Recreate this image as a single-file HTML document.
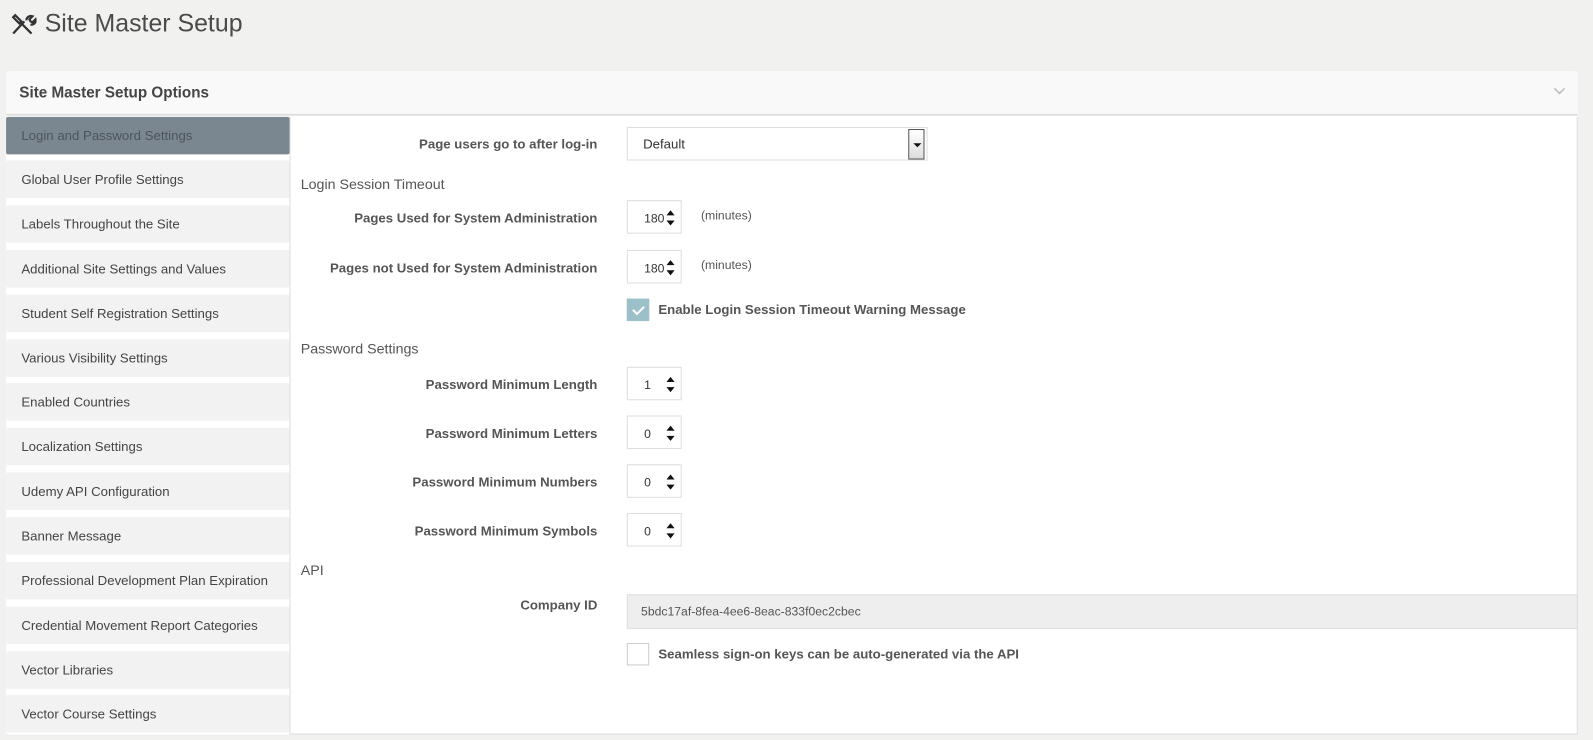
<!DOCTYPE html>
<html><head><meta charset="utf-8"><style>
*{box-sizing:border-box;margin:0;padding:0}
body{width:1593px;height:740px;background:#f1f1f0;font-family:"Liberation Sans",sans-serif;color:#555;position:relative;overflow:hidden}
#w{position:absolute;left:0;top:0;width:1568px;height:728px;transform:scale(1.01594);transform-origin:0 0}
.t{position:absolute;left:44px;top:10px;font-size:24.5px;color:#4a4a4a}
.panel{position:absolute;left:6px;top:70px;width:1547px;height:653px;background:#fff;border-radius:3px}
.ph{height:44px;background:#f9f9f9;border-bottom:2px solid #ddd;padding:13px 13px;font-weight:bold;font-size:15px;color:#444;border-radius:3px 3px 0 0}
.nav{position:absolute;left:6px;top:115px;width:279px}
.ni{position:absolute;left:0;width:279px;height:37px;background:#f2f2f2;font-size:13px;color:#444;padding:11px 15px;border-radius:2px}
.ni.a{background:#7b8790;color:#4d545b}
.content{position:absolute;left:285px;top:115px;width:1268px;height:608px;border:1px solid #ddd;border-top:none}
.lbl{position:absolute;right:980px;font-weight:bold;font-size:13px;color:#555;text-align:right;white-space:nowrap}
.sec{position:absolute;left:296px;font-size:14px;color:#555}
.sp{position:absolute;left:617px;width:54px;height:33px;border:1px solid #ddd;font-size:12px;color:#333;padding:10px 0 0 16px}
.sp:after{content:"";position:absolute;left:38px;top:9px;border:4px solid transparent;border-top:0;border-bottom:5px solid #111}
.sp:before{content:"";position:absolute;left:38px;top:19px;border:4px solid transparent;border-bottom:0;border-top:5px solid #111}
.min{position:absolute;left:690px;font-size:12px;color:#555}
.cb{position:absolute;left:617px;width:22px;height:22px;border:1px solid #ccc}
.cl{position:absolute;left:648px;font-weight:bold;font-size:13px;color:#555}
</style></head><body><div id="w">
<svg style="position:absolute;left:10px;top:13px" width="26" height="22" viewBox="0 0 26 22"><path d="M3 20L14 8M5 2l6 6-2 2-6-6zM21 20L10 9M16 7c0-3 3-5 6-4l-3 3 1 2 2 1 3-3c1 3-2 6-5 5" stroke="#333" stroke-width="2.2" fill="none"/></svg>
<div class="t">Site Master Setup</div>
<div class="panel"><div class="ph">Site Master Setup Options</div>
<svg style="position:absolute;right:12px;top:16px" width="12" height="8"><path d="M1 1l5 5 5-5" stroke="#bbb" stroke-width="1.5" fill="none"/></svg></div>
<div class="content"></div>
<div class="nav">
<div class="ni a" style="top:0">Login and Password Settings</div>
<div class="ni" style="top:43px">Global User Profile Settings</div>
<div class="ni" style="top:87px">Labels Throughout the Site</div>
<div class="ni" style="top:131px">Additional Site Settings and Values</div>
<div class="ni" style="top:175px">Student Self Registration Settings</div>
<div class="ni" style="top:219px">Various Visibility Settings</div>
<div class="ni" style="top:262px">Enabled Countries</div>
<div class="ni" style="top:306px">Localization Settings</div>
<div class="ni" style="top:350px">Udemy API Configuration</div>
<div class="ni" style="top:394px">Banner Message</div>
<div class="ni" style="top:438px">Professional Development Plan Expiration</div>
<div class="ni" style="top:482px">Credential Movement Report Categories</div>
<div class="ni" style="top:526px">Vector Libraries</div>
<div class="ni" style="top:569px">Vector Course Settings</div>
</div>
<div class="lbl" style="top:134px">Page users go to after log-in</div>
<div style="position:absolute;left:617px;top:125px;width:296px;height:33px;border:1px solid #ddd;font-size:13px;color:#333;padding:8px 0 0 15px">Default
<div style="position:absolute;right:2px;top:1px;width:16px;height:30px;border:1px solid #555;background:linear-gradient(#fff,#ddd)"><div style="position:absolute;left:4px;top:13px;border:4px solid transparent;border-bottom:0;border-top:4px solid #111"></div></div></div>
<div class="sec" style="top:173px">Login Session Timeout</div>
<div class="lbl" style="top:207px">Pages Used for System Administration</div>
<div class="sp" style="top:197px;">180</div><div class="min" style="top:205px">(minutes)</div>
<div class="lbl" style="top:256px">Pages not Used for System Administration</div>
<div class="sp" style="top:246px;">180</div><div class="min" style="top:254px">(minutes)</div>
<div class="cb" style="top:294px;background:#9cc0ca;border-color:#9cc0ca"><svg width="20" height="20"><path d="M5 10l4 4 7-7" stroke="#fff" stroke-width="2" fill="none"/></svg></div>
<div class="cl" style="top:297px">Enable Login Session Timeout Warning Message</div>
<div class="sec" style="top:335px">Password Settings</div>
<div class="lbl" style="top:371px">Password Minimum Length</div><div class="sp" style="top:361px">1</div>
<div class="lbl" style="top:419px">Password Minimum Letters</div><div class="sp" style="top:409px">0</div>
<div class="lbl" style="top:467px">Password Minimum Numbers</div><div class="sp" style="top:457px">0</div>
<div class="lbl" style="top:515px">Password Minimum Symbols</div><div class="sp" style="top:505px">0</div>
<div class="sec" style="top:553px">API</div>
<div class="lbl" style="top:588px">Company ID</div>
<div style="position:absolute;left:617px;top:585px;width:936px;height:34px;background:#eee;border:1px solid #ddd;font-size:12px;color:#555;padding:9px 0 0 13px">5bdc17af-8fea-4ee6-8eac-833f0ec2cbec</div>
<div class="cb" style="top:633px"></div>
<div class="cl" style="top:636px">Seamless sign-on keys can be auto-generated via the API</div>
</div></body></html>
